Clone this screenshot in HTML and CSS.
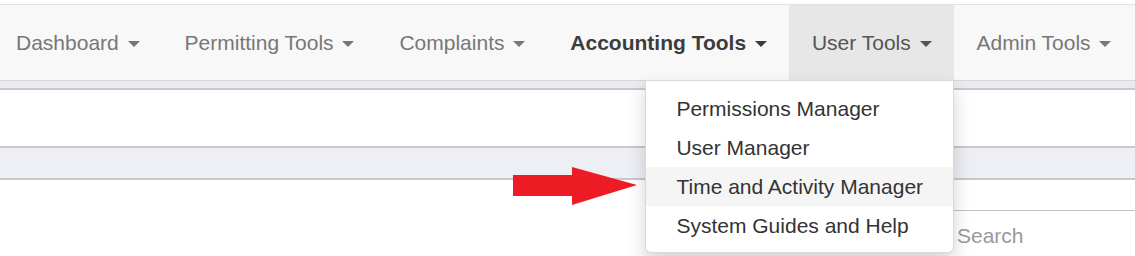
FILE: index.html
```html
<!doctype html>
<html lang="en">
  <head>
    <meta charset="utf-8">
    <title>User Tools</title>
    <link rel="stylesheet" href="styles.css">
  </head>
  <body>
    <nav class="navbar">
      <ul class="nav">
        <li><a href="#">Dashboard <span class="caret"></span></a></li>
        <li><a href="#">Permitting Tools <span class="caret"></span></a></li>
        <li><a href="#">Complaints <span class="caret"></span></a></li>
        <li class="strong"><a href="#">Accounting Tools <span class="caret"></span></a></li>
        <li class="open">
          <a href="#">User Tools <span class="caret"></span></a>
          <!-- open dropdown -->
          <ul class="dropdown-menu">
            <li><a href="#">Permissions Manager</a></li>
            <li><a href="#">User Manager</a></li>
            <li class="hover"><a href="#">Time and Activity Manager</a></li>
            <li><a href="#">System Guides and Help</a></li>
          </ul>
        </li>
        <li><a href="#">Admin Tools <span class="caret"></span></a></li>
      </ul>
    </nav>

    <div class="subbar"></div>
    <div class="page-space"></div>
    <div class="band"></div>

    <div class="search-row">
      <input class="search" type="text" placeholder="Search">
    </div>

    <svg class="arrow" viewBox="0 0 126 40" width="126" height="40">
      <polygon points="1,9 60,9 60,1 125,19 60,39 60,30 1,30" fill="#ed1c24"></polygon>
    </svg>
  </body>
</html>
```

FILE: styles.css
```css
* {
  margin: 0;
  padding: 0;
  box-sizing: border-box;
}

body {
  font-family: "Liberation Sans", Arial, sans-serif;
  font-size: 21px;
  color: #333;
  background: #fff;
  padding-top: 4px;
  position: relative;
  overflow: hidden;
  height: 256px;
}

a {
  text-decoration: none;
  color: inherit;
}

.navbar {
  background: #f8f8f8;
  border-top: 1px solid #e2e2e2;
  border-bottom: 1px solid #d6d6d6;
  height: 77px;
  position: relative;
  z-index: 5;
}

.nav {
  list-style: none;
  display: flex;
  margin-left: -6.5px;
}

.nav > li {
  position: relative;
}

.nav > li > a {
  display: block;
  padding: 22.5px 22.5px;
  line-height: 30px;
  color: #777;
  white-space: nowrap;
}

.nav > li.strong > a {
  font-weight: bold;
  color: #3c3c3c;
}

.nav > li.open > a {
  background: #e7e7e7;
  color: #555;
}

.caret {
  display: inline-block;
  width: 0;
  height: 0;
  margin-left: 3px;
  vertical-align: middle;
  border-top: 6px solid;
  border-left: 6px solid transparent;
  border-right: 6px solid transparent;
}

.dropdown-menu {
  position: absolute;
  top: 100%;
  right: 0;
  min-width: 240px;
  list-style: none;
  background: #fff;
  border: 1px solid rgba(0, 0, 0, 0.15);
  border-radius: 0 0 6px 6px;
  box-shadow: 0 9px 18px rgba(0, 0, 0, 0.175);
  padding: 8px 0 7px;
}

.dropdown-menu a {
  display: block;
  padding: 4.5px 30px;
  line-height: 30px;
  color: #333;
  white-space: nowrap;
}

.dropdown-menu .hover a {
  background: #f5f5f5;
}

.subbar {
  height: 9px;
  background: #ebebef;
  border-bottom: 2px solid #c8c8cc;
}

.page-space {
  height: 56px;
}

.band {
  height: 34px;
  background: #eeeff4;
  border-top: 2px solid #c8c8cc;
  border-bottom: 2px solid #c8c8cc;
}

.search-row {
  display: flex;
  justify-content: flex-end;
  padding-top: 30px;
  margin-right: -20px;
}

.search {
  width: 215px;
  height: 46px;
  border: none;
  border-top: 1px solid #c4c4c4;
  padding: 4px 0 0 17px;
  font-family: "Liberation Sans", Arial, sans-serif;
  font-size: 21px;
  color: #555;
  background: #fff;
  outline: none;
}

.search::placeholder {
  color: #999;
}

.arrow {
  position: absolute;
  left: 512px;
  top: 166px;
}
```
